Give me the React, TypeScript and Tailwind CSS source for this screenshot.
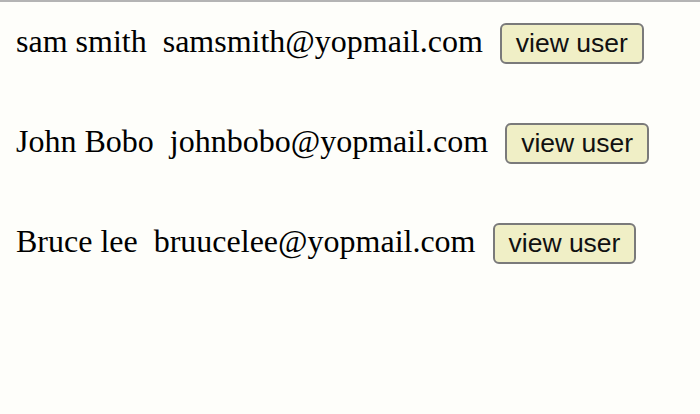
const users = [
  { name: "sam smith", email: "samsmith@yopmail.com" },
  { name: "John Bobo", email: "johnbobo@yopmail.com" },
  { name: "Bruce lee", email: "bruucelee@yopmail.com" },
];

export default function App() {
  return (
    <div className="w-[700px] h-[414px] bg-[#fefefa] border-t-2 border-[#b4b4b4] text-black font-['Liberation_Serif',serif] text-[32px] leading-[37px]">
      <div className="flex flex-col pl-4 pt-[21px] gap-[59px]">
        {users.map((u) => (
          <div key={u.email} className="flex items-baseline">
            <span>{u.name}</span>
            <span className="ml-4">{u.email}</span>
            <button className="ml-[17px] h-[41px] px-[14px] border-2 border-[#7a7a7a] rounded-[6px] bg-[#f0efc6] font-['Liberation_Sans',sans-serif] text-[26.5px] leading-none text-[#111]">
              view user
            </button>
          </div>
        ))}
      </div>
    </div>
  );
}
